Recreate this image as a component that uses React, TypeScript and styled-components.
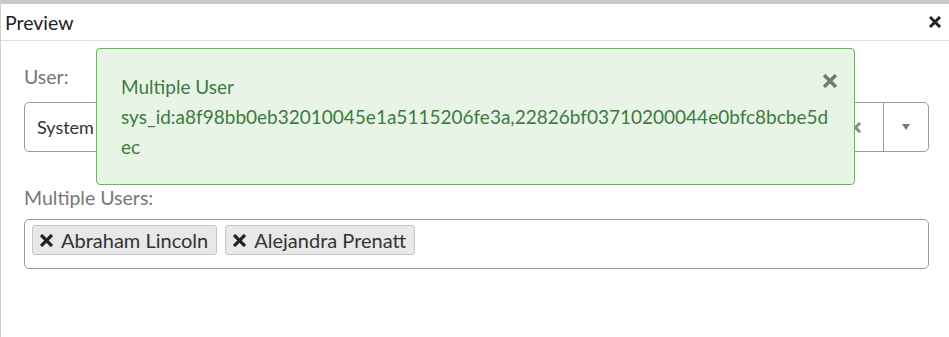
import React from 'react';
import styled, { createGlobalStyle } from 'styled-components';

const GlobalStyle = createGlobalStyle`
  html, body {
    margin: 0;
    padding: 0;
    background: #ffffff;
    font-family: 'Lato', 'Open Sans', sans-serif;
  }
`;

const Frame = styled.div`
  position: relative;
  width: 949px;
  height: 337px;
  box-sizing: border-box;
  border-top: 4px solid #c8c8c8;
  border-left: 1px solid #d0d0d0;
  overflow: hidden;
  background: #ffffff;
`;

const Header = styled.div`
  display: flex;
  align-items: center;
  justify-content: space-between;
  height: 36px;
  padding: 0 8px 0 4px;
  border-bottom: 1px solid #dddddd;
`;

const Title = styled.div`
  font-size: 19.5px;
  color: #222;
`;

const CloseIcon = ({ size = 12, color = '#222' }: { size?: number; color?: string }) => (
  <svg width={size} height={size} viewBox="0 0 12 12" style={{ display: 'block' }}>
    <path d="M2 2 L10 10 M10 2 L2 10" stroke={color} strokeWidth={3} strokeLinecap="square" />
  </svg>
);

const Body = styled.div`
  display: flex;
  flex-direction: column;
  padding: 24px 20px 0 23px;
`;

const Label = styled.div<{ $gap: number }>`
  font-size: 19.5px;
  line-height: 24px;
  color: #777;
  margin-bottom: ${(p) => p.$gap}px;
`;

const Field = styled.div`
  display: flex;
  align-items: stretch;
  height: 50px;
  box-sizing: border-box;
  border: 1px solid #9a9a9a;
  border-radius: 5px;
  margin-bottom: 34px;
`;

const SelectText = styled.div`
  flex: 1;
  display: flex;
  align-items: center;
  padding-left: 12px;
  font-size: 18px;
  color: #333;
  white-space: nowrap;
`;

const ClearBtn = styled.div`
  width: 56px;
  display: flex;
  align-items: center;
  justify-content: center;
`;

const Caret = styled.div`
  width: 44px;
  display: flex;
  align-items: center;
  justify-content: center;
  border-left: 1px solid #9a9a9a;
`;

const TagBox = styled.div`
  display: flex;
  align-items: flex-start;
  gap: 8px;
  height: 50px;
  box-sizing: border-box;
  border: 1px solid #9a9a9a;
  border-radius: 5px;
  padding: 5px 7px 0;
`;

const Tag = styled.div`
  display: flex;
  align-items: center;
  gap: 8px;
  height: 30px;
  box-sizing: border-box;
  padding: 0 8px 0 7px;
  background: #e8e8e8;
  border: 1px solid #c6c6c6;
  border-radius: 3px;
  font-size: 20px;
  color: #333;
`;

const Toast = styled.div`
  position: absolute;
  left: 95px;
  top: 44px;
  width: 759px;
  height: 137px;
  box-sizing: border-box;
  padding: 23px 24px 0 24px;
  background: #e8f5e6;
  border: 1px solid #5cbc55;
  border-radius: 4px;
  color: #3d7a3d;
  font-size: 19px;
  line-height: 30px;
`;

const ToastText = styled.div`
  width: 710px;
  word-break: break-all;
`;

const ToastClose = styled.div`
  position: absolute;
  right: 17px;
  top: 25px;
  line-height: 0;
`;

export default function App() {
  return (
    <>
      <GlobalStyle />
      <Frame>
        <Header>
          <Title>Preview</Title>
          <CloseIcon size={12} color="#222" />
        </Header>
        <Body>
          <Label $gap={13}>User:</Label>
          <Field>
            <SelectText>System Administrator</SelectText>
            <ClearBtn>
              <CloseIcon size={11} color="#888" />
            </ClearBtn>
            <Caret>
              <svg width="10" height="8" viewBox="0 0 10 8">
                <path d="M1 1 L9 1 L5 7 Z" fill="#777" />
              </svg>
            </Caret>
          </Field>
          <Label $gap={9}>Multiple Users:</Label>
          <TagBox>
            <Tag>
              <CloseIcon size={13} color="#222" />
              Abraham Lincoln
            </Tag>
            <Tag>
              <CloseIcon size={13} color="#222" />
              Alejandra Prenatt
            </Tag>
          </TagBox>
        </Body>
        <Toast>
          <ToastText>
            Multiple User
            <br />
            sys_id:a8f98bb0eb32010045e1a5115206fe3a,22826bf03710200044e0bfc8bcbe5dec
          </ToastText>
          <ToastClose>
            <CloseIcon size={14} color="#777" />
          </ToastClose>
        </Toast>
      </Frame>
    </>
  );
}
